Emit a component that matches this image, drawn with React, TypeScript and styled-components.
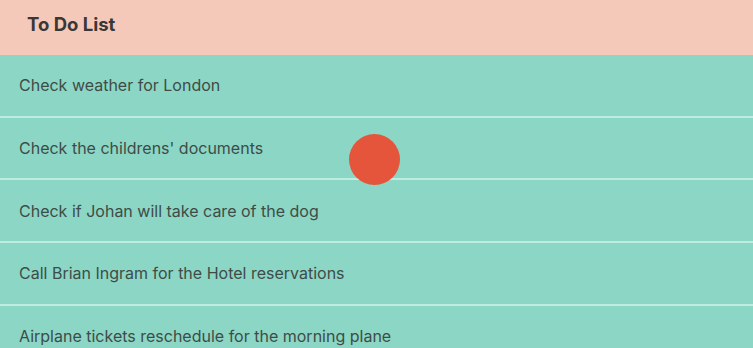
import React from "react";
import styled, { createGlobalStyle } from "styled-components";

const Global = createGlobalStyle`
  html, body { margin: 0; padding: 0; background: #8cd6c5; }
  body { font-family: Inter, "Noto Sans", sans-serif; }
`;

const Page = styled.div`
  position: relative;
  width: 753px;
  height: 348px;
  overflow: hidden;
  display: flex;
  flex-direction: column;
  background: #8cd6c5;
`;

const Header = styled.header`
  height: 55px;
  flex: none;
  background: #f4c9b9;
  display: flex;
  align-items: center;
  padding: 0 0 7px 27px;
  box-sizing: border-box;
  font-size: 18.5px;
  font-weight: 700;
  color: #3a3836;
`;

const List = styled.ul`
  list-style: none;
  margin: 0;
  padding: 0;
  display: flex;
  flex-direction: column;
`;

const Row = styled.li`
  height: 62.67px;
  flex: none;
  box-sizing: border-box;
  border-bottom: 2px solid #bfece1;
  display: flex;
  align-items: center;
  padding: 0 0 0 19px;
  font-size: 16px;
  color: #3e4c48;
`;

const Dot = styled.div`
  position: absolute;
  left: 349px;
  top: 134px;
  width: 51px;
  height: 51px;
  border-radius: 50%;
  background: #e4553b;
`;

const items = [
  "Check weather for London",
  "Check the childrens' documents",
  "Check if Johan will take care of the dog",
  "Call Brian Ingram for the Hotel reservations",
  "Airplane tickets reschedule for the morning plane",
];

export default function App() {
  return (
    <Page>
      <Global />
      <Header>To Do List</Header>
      <List>
        {items.map((t) => (
          <Row key={t}>{t}</Row>
        ))}
      </List>
      <Dot />
    </Page>
  );
}
